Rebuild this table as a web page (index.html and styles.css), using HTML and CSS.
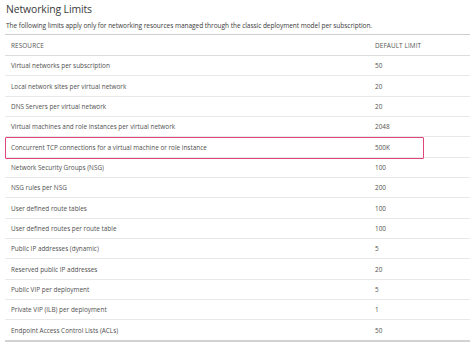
FILE: index.html
```html
<!DOCTYPE html>
<html>
<head>
<meta charset="utf-8">
<link rel="stylesheet" href="styles.css">
</head>
<body>
<div class="page">
  <h1 class="title">Networking Limits</h1>
  <p class="intro">The following limits apply only for networking resources managed through the classic deployment model per subscription.</p>
  <table class="limits">
    <thead>
      <tr><th class="col-res">RESOURCE</th><th class="col-lim">DEFAULT LIMIT</th></tr>
    </thead>
    <tbody>
      <tr><td>Virtual networks per subscription</td><td>50</td></tr>
      <tr><td>Local network sites per virtual network</td><td>20</td></tr>
      <tr><td>DNS Servers per virtual network</td><td>20</td></tr>
      <tr><td>Virtual machines and role instances per virtual network</td><td>2048</td></tr>
      <tr><td class="marked">Concurrent TCP connections for a virtual machine or role instance<span class="highlight"></span></td><td>500K</td></tr>
      <tr><td>Network Security Groups (NSG)</td><td>100</td></tr>
      <tr><td>NSG rules per NSG</td><td>200</td></tr>
      <tr><td>User defined route tables</td><td>100</td></tr>
      <tr><td>User defined routes per route table</td><td>100</td></tr>
      <tr><td>Public IP addresses (dynamic)</td><td>5</td></tr>
      <tr><td>Reserved public IP addresses</td><td>20</td></tr>
      <tr><td>Public VIP per deployment</td><td>5</td></tr>
      <tr><td>Private VIP (ILB) per deployment</td><td>1</td></tr>
      <tr><td>Endpoint Access Control Lists (ACLs)</td><td>50</td></tr>
    </tbody>
  </table>
</div>
</body>
</html>
```

FILE: styles.css
```css
html, body {
  margin: 0;
  padding: 0;
  background: #ffffff;
}

.page {
  padding: 0 4px 0 5px;
  font-family: "Open Sans", "Noto Sans", sans-serif;
  color: #4a4a4a;
}

.title {
  margin: 0;
  padding: 2px 0 0 1px;
  font-size: 10.4px;
  line-height: 14px;
  font-weight: 400;
  color: #3a3a3a;
  letter-spacing: -0.1px;
}

.intro {
  margin: 5px 0 0 1px;
  font-size: 6.55px;
  line-height: 9px;
  color: #3c3c3c;
  letter-spacing: -0.05px;
}

.limits {
  margin-top: 4px;
  width: 465px;
  border-collapse: collapse;
  border-top: 1px solid #cfcfcf;
  border-bottom: 2px solid #d2d2d2;
  font-size: 6.4px;
}

.limits th {
  height: 20px;
  padding: 0 0 0 6px;
  text-align: left;
  font-weight: 400;
  color: #555;
  border-bottom: 1px solid #dcdcdc;
  letter-spacing: 0.1px;
}

.col-res { width: 358px; }

.limits td {
  height: 19.35px;
  padding: 0 0 0 6px;
  color: #4f4f4f;
  border-bottom: 1px solid #e8e8e8;
}

.limits tbody tr:last-child td {
  border-bottom: none;
}

.marked {
  position: relative;
}

.highlight {
  position: absolute;
  left: 0;
  top: 0;
  width: 417px;
  height: 20px;
  border: 1.5px solid #e0457c;
  border-radius: 1px;
}
```
